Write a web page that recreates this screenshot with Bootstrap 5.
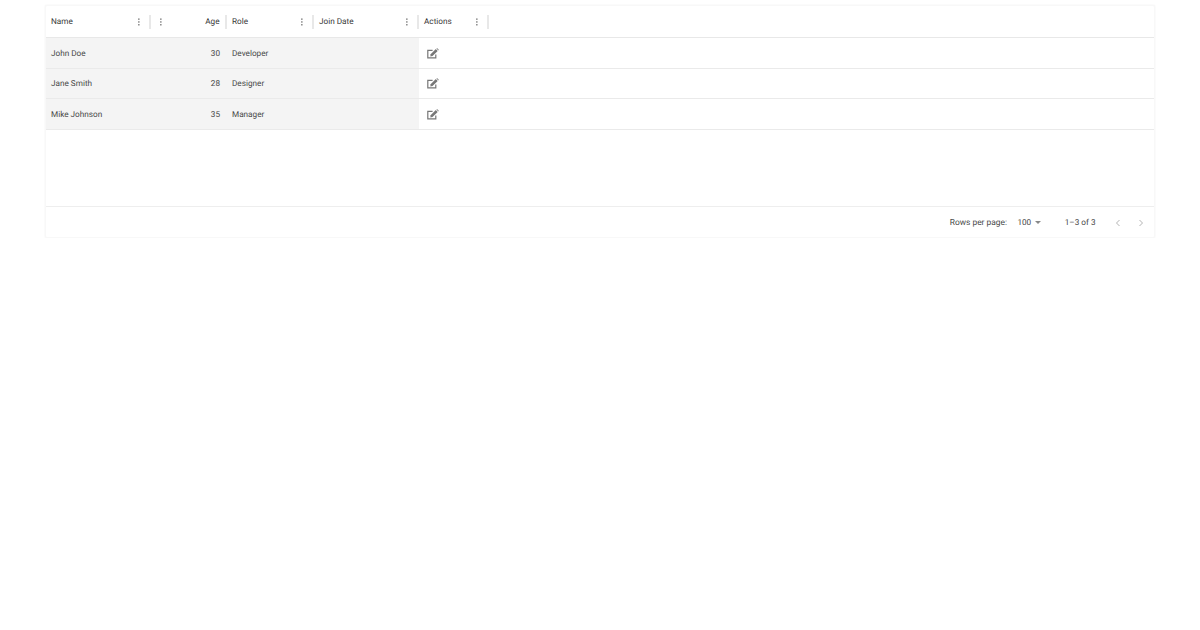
<!DOCTYPE html>
<html lang="en"><head><meta charset="utf-8"><title>Team grid</title>
<link rel="stylesheet" href="https://cdn.jsdelivr.net/npm/bootstrap@5.3.0/dist/css/bootstrap.min.css">
<style>
body{background:#fff;font-family:Roboto,"Liberation Sans",sans-serif;font-size:8.2px;color:#484848;padding:5px 45px 0;text-rendering:geometricPrecision}
.grid-box{height:233px;border:1px solid #f8f8f8;border-radius:2px;box-shadow:0 0 2px rgba(0,0,0,.07)}
.head-row{height:32px;border-bottom:1px solid #e8e8e8;color:#383838}
.data-row{height:30.5px;border-bottom:1px solid #eaeaea}
.c1{width:105px}.c2{width:76px}.c3{width:87px}.c4{width:105px}.c5{width:70px}
.head-cell{height:100%;padding:0 8px 0 5px;position:relative}
.head-cell.flip{padding:0 7.5px 0 6px}
.head-cell>span,.foot-row>span{padding-top:2px}
.head-cell::after{content:"";position:absolute;right:0;top:9px;height:14px;width:2px;background:#e8e8e8}
.kebab{width:8px;height:8px;flex:none;color:#777}
.shade{width:373px;background:#f4f4f4;height:100%;padding-top:2px}
.shade>div{padding:0 7px 0 5px}
.filler{flex:1}
.foot-row{height:31px;border-top:1px solid #eeeeee;padding:1px 9px 0 0;color:#484848}
.edit-ic{width:12px;height:11px;margin-left:8px;margin-top:1px;color:#777}
.foot-row>.tri{width:0;height:0;padding:0;border-left:3px solid transparent;border-right:3px solid transparent;border-top:3px solid #888;margin-left:4px}
.chev{width:8px;height:8px;color:#b4b4b4}
.rows-label{font-size:8.4px}
.rows-value{margin-left:10.5px}
.foot-range{margin-left:23.5px}.foot-prev{margin-left:18.5px}.foot-next{margin-left:15px}
</style></head><body>
<div class="grid-box d-flex flex-column bg-white">
  <div class="head-row d-flex flex-shrink-0">
    <div class="head-cell c1 d-flex align-items-center justify-content-between"><span>Name</span><svg class="kebab" viewBox="0 0 8 8"><g fill="currentColor"><rect x="3.2" y="0.4" width="1.3" height="1.5"/><rect x="3.2" y="3.2" width="1.3" height="1.5"/><rect x="3.2" y="6" width="1.3" height="1.5"/></g></svg></div>
    <div class="head-cell flip c2 d-flex align-items-center justify-content-between"><svg class="kebab" viewBox="0 0 8 8"><g fill="currentColor"><rect x="3.2" y="0.4" width="1.3" height="1.5"/><rect x="3.2" y="3.2" width="1.3" height="1.5"/><rect x="3.2" y="6" width="1.3" height="1.5"/></g></svg><span>Age</span></div>
    <div class="head-cell c3 d-flex align-items-center justify-content-between"><span>Role</span><svg class="kebab" viewBox="0 0 8 8"><g fill="currentColor"><rect x="3.2" y="0.4" width="1.3" height="1.5"/><rect x="3.2" y="3.2" width="1.3" height="1.5"/><rect x="3.2" y="6" width="1.3" height="1.5"/></g></svg></div>
    <div class="head-cell c4 d-flex align-items-center justify-content-between"><span>Join Date</span><svg class="kebab" viewBox="0 0 8 8"><g fill="currentColor"><rect x="3.2" y="0.4" width="1.3" height="1.5"/><rect x="3.2" y="3.2" width="1.3" height="1.5"/><rect x="3.2" y="6" width="1.3" height="1.5"/></g></svg></div>
    <div class="head-cell c5 d-flex align-items-center justify-content-between"><span>Actions</span><svg class="kebab" viewBox="0 0 8 8"><g fill="currentColor"><rect x="3.2" y="0.4" width="1.3" height="1.5"/><rect x="3.2" y="3.2" width="1.3" height="1.5"/><rect x="3.2" y="6" width="1.3" height="1.5"/></g></svg></div>
  </div>
  <div class="data-row d-flex align-items-center">
    <div class="shade d-flex align-items-center"><div class="c1">John Doe</div><div class="c2 text-end">30</div><div class="c3">Developer</div><div class="c4"></div></div>
    <svg class="edit-ic" viewBox="0 0 12 11"><path d="M8.8 6.5V9.9H.8V2.4H5.6" fill="none" stroke="currentColor" stroke-width="1.2"/><path d="M3.6 6.2L8.8 1l1.9 1.9L5.5 8.1 3.3 8.4z" fill="currentColor"/><path d="M9.5.4l.5-.4 1.8 1.8-.5.6z" fill="currentColor"/></svg>
  </div>
  <div class="data-row d-flex align-items-center">
    <div class="shade d-flex align-items-center"><div class="c1">Jane Smith</div><div class="c2 text-end">28</div><div class="c3">Designer</div><div class="c4"></div></div>
    <svg class="edit-ic" viewBox="0 0 12 11"><path d="M8.8 6.5V9.9H.8V2.4H5.6" fill="none" stroke="currentColor" stroke-width="1.2"/><path d="M3.6 6.2L8.8 1l1.9 1.9L5.5 8.1 3.3 8.4z" fill="currentColor"/><path d="M9.5.4l.5-.4 1.8 1.8-.5.6z" fill="currentColor"/></svg>
  </div>
  <div class="data-row d-flex align-items-center">
    <div class="shade d-flex align-items-center"><div class="c1">Mike Johnson</div><div class="c2 text-end">35</div><div class="c3">Manager</div><div class="c4"></div></div>
    <svg class="edit-ic" viewBox="0 0 12 11"><path d="M8.8 6.5V9.9H.8V2.4H5.6" fill="none" stroke="currentColor" stroke-width="1.2"/><path d="M3.6 6.2L8.8 1l1.9 1.9L5.5 8.1 3.3 8.4z" fill="currentColor"/><path d="M9.5.4l.5-.4 1.8 1.8-.5.6z" fill="currentColor"/></svg>
  </div>
  <div class="filler"></div>
  <div class="foot-row d-flex align-items-center justify-content-end flex-shrink-0">
    <span class="rows-label">Rows per page:</span>
    <span class="rows-value">100</span><span class="tri"></span>
    <span class="foot-range">1–3 of 3</span>
    <svg class="chev foot-prev" viewBox="0 0 8 8"><path d="M5.5 1L2.5 4l3 3" fill="none" stroke="currentColor"/></svg>
    <svg class="chev foot-next" viewBox="0 0 8 8"><path d="M2.5 1l3 3-3 3" fill="none" stroke="currentColor"/></svg>
  </div>
</div>
</body></html>
